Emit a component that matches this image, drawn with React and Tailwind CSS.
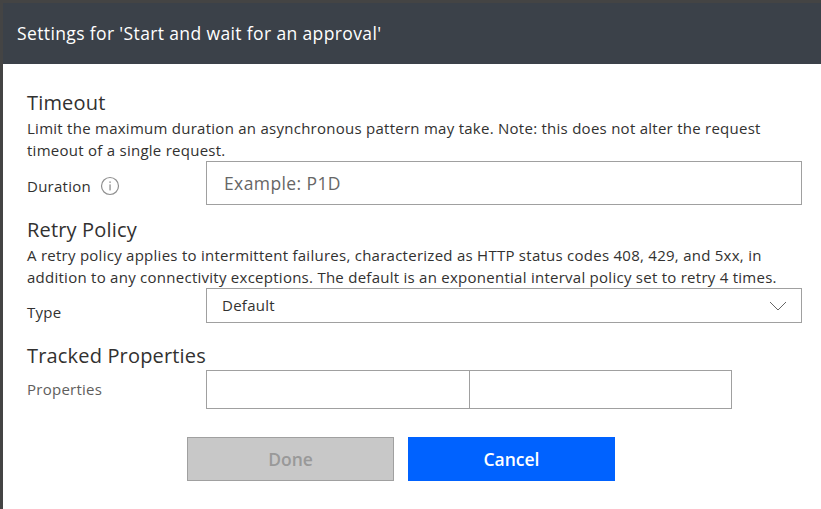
import React from "react";

function Heading({ children }) {
  return <h2 className="text-[20px] leading-[26px] font-normal text-[#323130] tracking-[0.17px]">{children}</h2>;
}

function Desc({ children }) {
  return <p className="text-[15px] leading-[22px] text-[#323130] tracking-[0.26px] pt-[1px]">{children}</p>;
}

export default function App() {
  return (
    <div className="w-[821px] h-[509px] overflow-hidden bg-[#444444] pt-[3px] pl-[3px] font-['Open_Sans','Noto_Sans',sans-serif]">
      <div className="h-[506px] bg-white flex flex-col">
        <header className="h-[61px] shrink-0 bg-[#3b4149] flex items-center pl-[14px] pb-[1px] text-[17.5px] text-white tracking-[0.37px]">
          Settings for 'Start and wait for an approval'
        </header>
        <main className="pl-[24px] pt-[26px] flex-1 flex flex-col">
          <Heading>Timeout</Heading>
          <Desc>
            Limit the maximum duration an asynchronous pattern may take. Note: this does not alter the request
            <br />
            timeout of a single request.
          </Desc>
          <div className="flex items-center h-[44px]">
            <div className="w-[179px] flex items-center gap-[9px] text-[15px] text-[#323130] tracking-[0.26px] pt-[6px]">
              <span>Duration</span>
              <svg width="20" height="20" viewBox="0 0 20 20" fill="none">
                <circle cx="10" cy="10" r="8.5" stroke="#8f8f8f" strokeWidth="1.2" />
                <rect x="9.4" y="5.4" width="1.3" height="1.5" fill="#8f8f8f" />
                <rect x="9.4" y="8.4" width="1.3" height="6" fill="#8f8f8f" />
              </svg>
            </div>
            <div className="w-[596px] h-[44px] border border-[#a0a0a0] flex items-center pl-[17px] text-[17.5px] text-[#666666] tracking-[0.4px]">
              Example: P1D
            </div>
          </div>

          <div className="mt-[12px]">
            <Heading>Retry Policy</Heading>
          </div>
          <Desc>
            A retry policy applies to intermittent failures, characterized as HTTP status codes 408, 429, and 5xx, in
            <br />
            addition to any connectivity exceptions. The default is an exponential interval policy set to retry 4 times.
          </Desc>
          <div className="flex items-start h-[35px]">
            <div className="w-[179px] pt-[13px] leading-[22px] text-[15px] text-[#323130] tracking-[0.26px]">Type</div>
            <div className="w-[596px] h-[35px] border border-[#a0a0a0] flex items-center justify-between pl-[15px] pr-[14px] text-[15px] text-[#323130] tracking-[0.26px]">
              <span>Default</span>
              <svg width="18" height="10" viewBox="0 0 18 10" fill="none">
                <path d="M1 1l8 8 8-8" stroke="#666666" strokeWidth="1" />
              </svg>
            </div>
          </div>

          <div className="mt-[20px]">
            <Heading>Tracked Properties</Heading>
          </div>
          <div className="flex items-start h-[39px] mt-[1px]">
            <div className="w-[179px] pt-[8px] leading-[22px] text-[15px] text-[#605e5c] tracking-[0.26px]">Properties</div>
            <div className="w-[526px] h-[39px] border border-[#a0a0a0] flex">
              <div className="w-[263px] border-r border-[#a0a0a0]" />
              <div className="flex-1" />
            </div>
          </div>

          <div className="flex gap-[14px] mt-[28px] pl-[160px]">
            <button className="w-[207px] h-[44px] bg-[#c8c8c8] border border-[#a0a0a0] text-[#999999] text-[17.5px] font-semibold">
              Done
            </button>
            <button className="w-[207px] h-[44px] bg-[#0062ff] text-white text-[17.5px] font-semibold">
              Cancel
            </button>
          </div>
        </main>
      </div>
    </div>
  );
}
